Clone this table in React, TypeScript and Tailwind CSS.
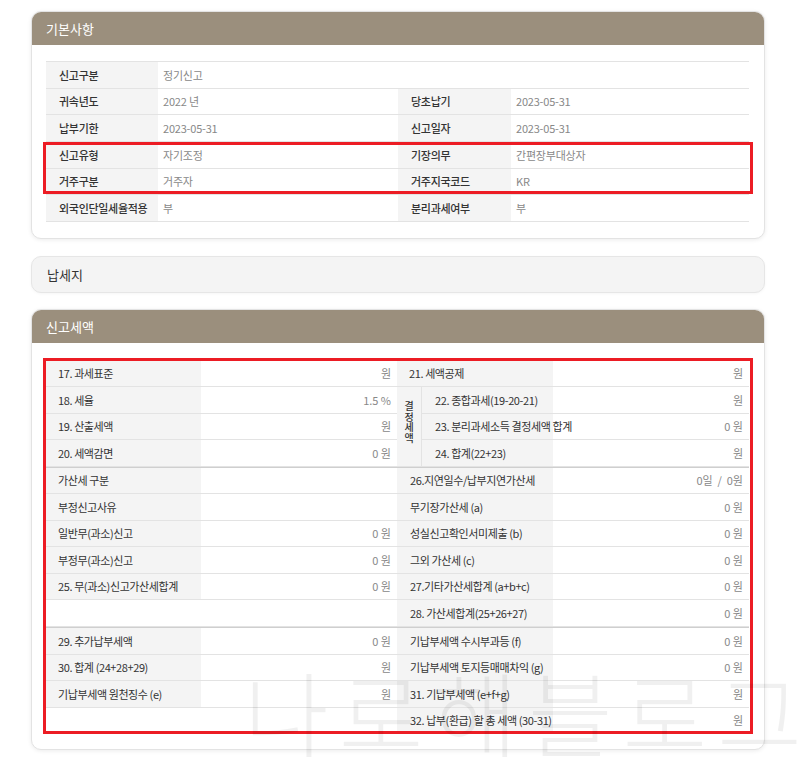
import React from "react";

const FONT = { fontFamily: '"Noto Sans CJK KR", "Noto Sans", sans-serif' };

function L1({ children, w }: { children: React.ReactNode; w: string }) {
  return (
    <div className={`${w} h-full flex items-center bg-[#f4f4f4] pl-[13px] text-[#333] font-medium tracking-[-0.3px]`}>{children}</div>
  );
}
function V1({ children, w }: { children: React.ReactNode; w: string }) {
  return <div className={`${w} h-full flex items-center bg-white pl-[5px] text-[#888] tracking-[-0.2px]`}>{children}</div>;
}

function Row1({ a, b, c, d }: { a: string; b: string; c?: string; d?: string }) {
  return (
    <div className="flex h-[26.67px] border-b border-[#e3e3e3]">
      <L1 w="w-[112px]">{a}</L1>
      {c === undefined ? (
        <V1 w="flex-1">{b}</V1>
      ) : (
        <>
          <V1 w="w-[240px]">{b}</V1>
          <L1 w="w-[113px]">{c}</L1>
          <V1 w="flex-1">{d}</V1>
        </>
      )}
    </div>
  );
}

function Lab({ children, className = "" }: { children?: React.ReactNode; className?: string }) {
  return (
    <div className={`relative z-[1] h-full flex items-center bg-[#f4f4f4] pl-[12px] text-[#333] whitespace-pre tracking-[-0.4px] ${className}`}>
      {children}
    </div>
  );
}
function Val({ children, className = "" }: { children?: React.ReactNode; className?: string }) {
  return (
    <div className={`h-full flex items-center justify-end bg-white pr-[6px] text-[#888] whitespace-pre ${className}`}>
      {children}
    </div>
  );
}

type R2 = { l?: string; v?: string; r: string; rv: string };

function Row2({ l, v, r, rv }: R2) {
  return (
    <div className="flex h-[26.6px] border-b border-[#e3e3e3]">
      {l === undefined ? (
        <div className="w-[351px] h-full bg-white" />
      ) : (
        <>
          <Lab className="w-[155px]">{l}</Lab>
          <Val className="w-[196px]">{v}</Val>
        </>
      )}
      <Lab className="w-[156px] pl-[13px]">{r}</Lab>
      <Val className="flex-1">{rv}</Val>
    </div>
  );
}

const group2: R2[] = [
  { l: "가산세 구분", v: "", r: "26.지연일수/납부지연가산세", rv: "0일  /  0원" },
  { l: "부정신고사유", v: "", r: "무기장가산세 (a)", rv: "0 원" },
  { l: "일반무(과소)신고", v: "0 원", r: "성실신고확인서미제출 (b)", rv: "0 원" },
  { l: "부정무(과소)신고", v: "0 원", r: "그외 가산세 (c)", rv: "0 원" },
  { l: "25. 무(과소)신고가산세합계", v: "0 원", r: "27.기타가산세합계 (a+b+c)", rv: "0 원" },
  { r: "28. 가산세합계(25+26+27)", rv: "0 원" },
];
const group3: R2[] = [
  { l: "29. 추가납부세액", v: "0 원", r: "기납부세액 수시부과등 (f)", rv: "0 원" },
  { l: "30. 합계 (24+28+29)", v: "원", r: "기납부세액 토지등매매차익 (g)", rv: "0 원" },
  { l: "기납부세액 원천징수 (e)", v: "원", r: "31. 기납부세액 (e+f+g)", rv: "원" },
  { r: "32. 납부(환급) 할 총 세액 (30-31)", rv: "원" },
];

function Card({ title, children }: { title: string; children: React.ReactNode }) {
  return (
    <div className="w-[734px] rounded-[10px] border border-[#e3e3e3] bg-white shadow-[0_1px_4px_rgba(0,0,0,0.08)] overflow-hidden">
      <div className="h-[33px] bg-[#9b8f7d] flex items-center pl-[14px] text-white text-[13px]">{title}</div>
      {children}
    </div>
  );
}

const B = "border-b border-[#e3e3e3]";

export default function App() {
  return (
    <div className="relative w-[800px] min-h-[761px] bg-white overflow-hidden pt-[11px] pl-[31px]" style={FONT}>
      <Card title="기본사항">
        <div className="pl-[14px] pr-[15px] pt-[16px] pb-[16px]">
          <div className="relative w-[703px] border-t border-[#e3e3e3] text-[11px]">
            <Row1 a="신고구분" b="정기신고" />
            <Row1 a="귀속년도" b="2022 년" c="당초납기" d="2023-05-31" />
            <Row1 a="납부기한" b="2023-05-31" c="신고일자" d="2023-05-31" />
            <Row1 a="신고유형" b="자기조정" c="기장의무" d="간편장부대상자" />
            <Row1 a="거주구분" b="거주자" c="거주지국코드" d="KR" />
            <Row1 a="외국인단일세율적용" b="부" c="분리과세여부" d="부" />
            <div className="pointer-events-none absolute left-[-3px] top-[80px] w-[710px] h-[52px] border-[3px] border-[#ec1c24]" />
          </div>
        </div>
      </Card>

      <div className="mt-[17px] w-[734px] h-[37px] rounded-[10px] border border-[#e6e6e6] bg-[#f4f4f4] shadow-[0_1px_3px_rgba(0,0,0,0.04)] flex items-center pl-[15px] text-[13px] text-[#333]">
        납세지
      </div>

      <div className="mt-[16px]">
        <Card title="신고세액">
          <div className="pl-[14px] pr-[15px] pt-[17px] pb-[15px]">
            <div className="relative w-[703px] border-t border-[#e3e3e3] text-[11px]">
              <div className="grid grid-cols-[155px_196px_25px_131px_196px] grid-rows-[repeat(4,26.4px)]">
                <Lab className={B}>17. 과세표준</Lab>
                <Val className={B}>원</Val>
                <Lab className={`col-span-2 pl-[10px] ${B}`}>21. 세액공제</Lab>
                <Val className={B}>원</Val>

                <Lab className={B}>18. 세율</Lab>
                <Val className={B}>1.5 %</Val>
                <div className="row-span-3 bg-[#f4f4f4] border-r border-b border-[#e3e3e3] flex flex-col items-center justify-center pb-[8px] text-[#333] font-medium text-[10px] leading-[10.5px]">
                  <span className="block">결</span>
                  <span className="block">정</span>
                  <span className="block">세</span>
                  <span className="block">액</span>
                </div>
                <Lab className={`pl-[13px] ${B}`}>22. 종합과세(19-20-21)</Lab>
                <Val className={B}>원</Val>

                <Lab className={B}>19. 산출세액</Lab>
                <Val className={B}>원</Val>
                <Lab className={`pl-[13px] ${B}`}>23. 분리과세소득 결정세액 합계</Lab>
                <Val className={B}>0 원</Val>

                <Lab className={B}>20. 세액감면</Lab>
                <Val className={B}>0 원</Val>
                <Lab className={`pl-[13px] ${B}`}>24. 합계(22+23)</Lab>
                <Val className={B}>원</Val>
              </div>

              <div className="border-t border-[#cfcfcf]">
                {group2.map((r, i) => (
                  <Row2 key={i} {...r} />
                ))}
              </div>
              <div className="border-t border-[#cfcfcf]">
                {group3.map((r, i) => (
                  <Row2 key={i} {...r} />
                ))}
              </div>
              <div className="pointer-events-none absolute z-[2] left-[-3px] top-[-3px] w-[710px] h-[376px] border-[3px] border-[#ec1c24]" />
            </div>
          </div>
        </Card>
      </div>

      <div className="pointer-events-none absolute z-[3] left-[244px] top-[664px] text-[92px] leading-none tracking-[10px] text-black/[0.06] whitespace-nowrap font-light">
        나로해블로그
      </div>
    </div>
  );
}
